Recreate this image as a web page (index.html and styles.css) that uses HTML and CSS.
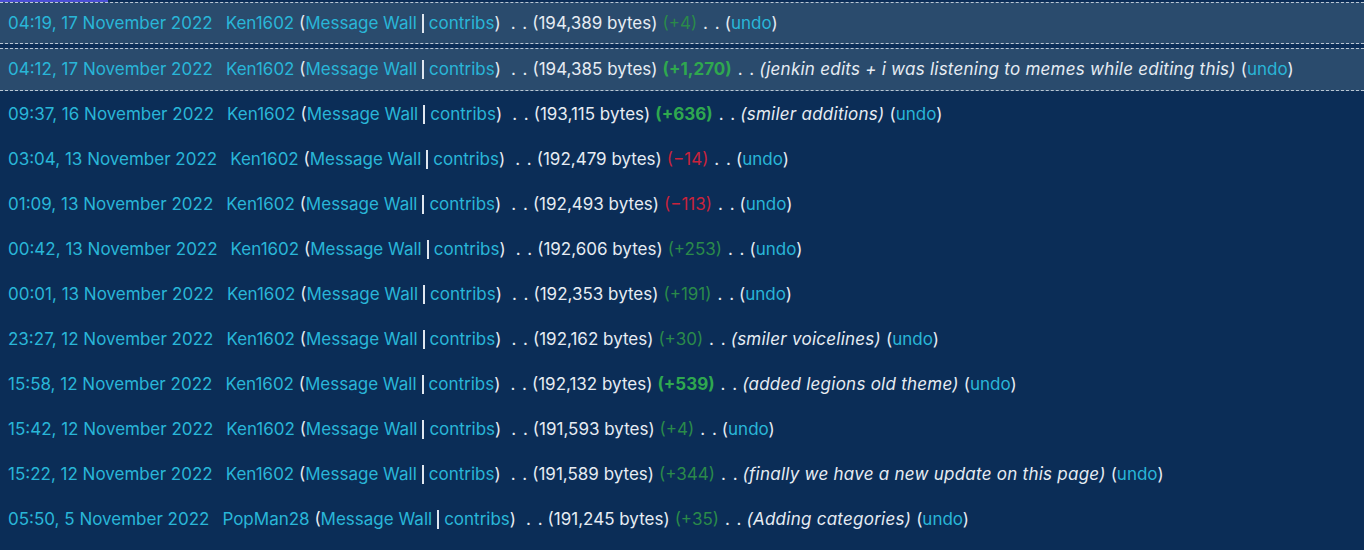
FILE: index.html
```html
<!DOCTYPE html>
<html lang="en">
<head>
<meta charset="utf-8">
<title>Revision history</title>
<link rel="stylesheet" href="styles.css">
</head>
<body>
<div class="topbar"></div>
<ul class="history">
  <li class="row sel first"><a class="date">04:19, 17 November 2022</a><span class="user"><a>Ken1602</a> <span class="tools">(<a>Message Wall</a><span class="pipe"></span><a>contribs</a>)</span></span><span class="sep">. .</span><span class="size">(194,389 bytes)</span><span class="diff pos">(+4)</span><span class="sep">. .</span><span class="undo">(<a>undo</a>)</span></li>
  <li class="row sel second"><a class="date">04:12, 17 November 2022</a><span class="user"><a>Ken1602</a> <span class="tools">(<a>Message Wall</a><span class="pipe"></span><a>contribs</a>)</span></span><span class="sep">. .</span><span class="size">(194,385 bytes)</span><span class="diff pos big">(+1,270)</span><span class="sep">. .</span><span class="comment">(jenkin edits + i was listening to memes while editing this)</span><span class="undo">(<a>undo</a>)</span></li>
  <li class="row"><a class="date">09:37, 16 November 2022</a><span class="user"><a>Ken1602</a> <span class="tools">(<a>Message Wall</a><span class="pipe"></span><a>contribs</a>)</span></span><span class="sep">. .</span><span class="size">(193,115 bytes)</span><span class="diff pos big">(+636)</span><span class="sep">. .</span><span class="comment">(smiler additions)</span><span class="undo">(<a>undo</a>)</span></li>
  <li class="row"><a class="date">03:04, 13 November 2022</a><span class="user"><a>Ken1602</a> <span class="tools">(<a>Message Wall</a><span class="pipe"></span><a>contribs</a>)</span></span><span class="sep">. .</span><span class="size">(192,479 bytes)</span><span class="diff neg">(−14)</span><span class="sep">. .</span><span class="undo">(<a>undo</a>)</span></li>
  <li class="row"><a class="date">01:09, 13 November 2022</a><span class="user"><a>Ken1602</a> <span class="tools">(<a>Message Wall</a><span class="pipe"></span><a>contribs</a>)</span></span><span class="sep">. .</span><span class="size">(192,493 bytes)</span><span class="diff neg">(−113)</span><span class="sep">. .</span><span class="undo">(<a>undo</a>)</span></li>
  <li class="row"><a class="date">00:42, 13 November 2022</a><span class="user"><a>Ken1602</a> <span class="tools">(<a>Message Wall</a><span class="pipe"></span><a>contribs</a>)</span></span><span class="sep">. .</span><span class="size">(192,606 bytes)</span><span class="diff pos">(+253)</span><span class="sep">. .</span><span class="undo">(<a>undo</a>)</span></li>
  <li class="row"><a class="date">00:01, 13 November 2022</a><span class="user"><a>Ken1602</a> <span class="tools">(<a>Message Wall</a><span class="pipe"></span><a>contribs</a>)</span></span><span class="sep">. .</span><span class="size">(192,353 bytes)</span><span class="diff pos">(+191)</span><span class="sep">. .</span><span class="undo">(<a>undo</a>)</span></li>
  <li class="row"><a class="date">23:27, 12 November 2022</a><span class="user"><a>Ken1602</a> <span class="tools">(<a>Message Wall</a><span class="pipe"></span><a>contribs</a>)</span></span><span class="sep">. .</span><span class="size">(192,162 bytes)</span><span class="diff pos">(+30)</span><span class="sep">. .</span><span class="comment">(smiler voicelines)</span><span class="undo">(<a>undo</a>)</span></li>
  <li class="row"><a class="date">15:58, 12 November 2022</a><span class="user"><a>Ken1602</a> <span class="tools">(<a>Message Wall</a><span class="pipe"></span><a>contribs</a>)</span></span><span class="sep">. .</span><span class="size">(192,132 bytes)</span><span class="diff pos big">(+539)</span><span class="sep">. .</span><span class="comment">(added legions old theme)</span><span class="undo">(<a>undo</a>)</span></li>
  <li class="row"><a class="date">15:42, 12 November 2022</a><span class="user"><a>Ken1602</a> <span class="tools">(<a>Message Wall</a><span class="pipe"></span><a>contribs</a>)</span></span><span class="sep">. .</span><span class="size">(191,593 bytes)</span><span class="diff pos">(+4)</span><span class="sep">. .</span><span class="undo">(<a>undo</a>)</span></li>
  <li class="row"><a class="date">15:22, 12 November 2022</a><span class="user"><a>Ken1602</a> <span class="tools">(<a>Message Wall</a><span class="pipe"></span><a>contribs</a>)</span></span><span class="sep">. .</span><span class="size">(191,589 bytes)</span><span class="diff pos">(+344)</span><span class="sep">. .</span><span class="comment">(finally we have a new update on this page)</span><span class="undo">(<a>undo</a>)</span></li>
  <li class="row"><a class="date">05:50, 5 November 2022</a><span class="user"><a>PopMan28</a> <span class="tools">(<a>Message Wall</a><span class="pipe"></span><a>contribs</a>)</span></span><span class="sep">. .</span><span class="size">(191,245 bytes)</span><span class="diff pos">(+35)</span><span class="sep">. .</span><span class="comment">(Adding categories)</span><span class="undo">(<a>undo</a>)</span></li>
</ul>
</body>
</html>
```

FILE: styles.css
```css
html, body {
  margin: 0;
  padding: 0;
  background: #0b2d57;
}

body {
  font-family: Inter, "Noto Sans", sans-serif;
  font-size: 17px;
  color: #e6ecf3;
  height: 550px;
  overflow: hidden;
}

.topbar {
  width: 108px;
  height: 2px;
  background: #4b4fd6;
}

.history {
  list-style: none;
  margin: 0;
  padding: 0;
}

.row {
  display: flex;
  align-items: baseline;
  white-space: nowrap;
  padding: 0 8px;
  height: 45px;
  line-height: 47px;
}

.row.sel {
  background: #2a4b6d;
  border-top: 1px dashed rgba(235, 240, 248, 0.75);
  border-bottom: 1px dashed rgba(235, 240, 248, 0.75);
  height: 40px;
  line-height: 40px;
}

.row.first {
  margin-bottom: 4px;
}

.row.second {
  height: 41px;
  line-height: 41px;
}

a {
  color: #29b6d8;
  text-decoration: none;
}

.date {
  margin-right: 13px;
}

.pipe {
  display: inline-block;
  width: 2px;
  height: 19px;
  background: #dfe6ef;
  margin: 0 5px;
  vertical-align: -4px;
}

.user {
  margin-right: 10px;
}

.sep {
  margin: 0 4px 0 0;
  letter-spacing: 1px;
}

.size {
  margin-right: 5px;
}

.diff {
  margin-right: 6px;
}

.diff.pos {
  color: #2a8a4a;
}

.diff.pos.big {
  color: #2fa84f;
  font-weight: 700;
}

.diff.neg {
  color: #c8233c;
}

.comment {
  font-style: italic;
  letter-spacing: 0.25px;
  margin-right: 5px;
}
```
